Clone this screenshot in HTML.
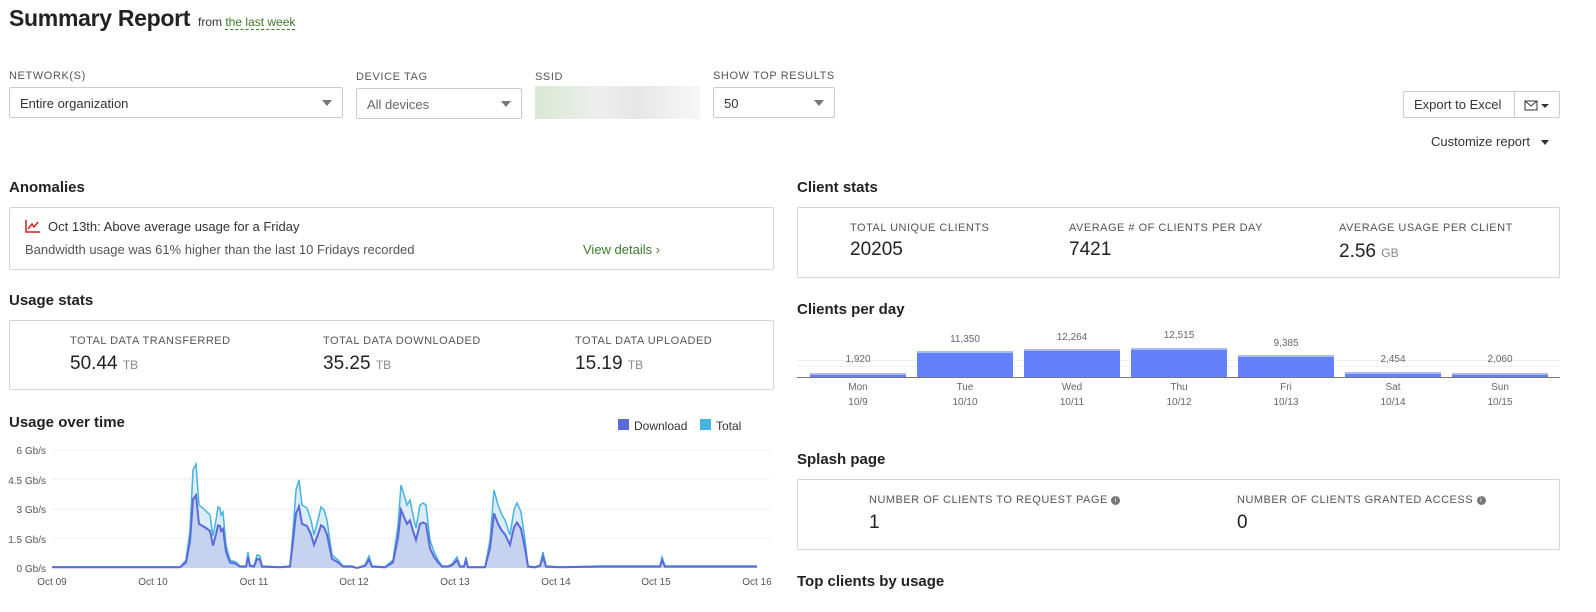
<!DOCTYPE html>
<html><head><meta charset="utf-8"><style>
*{box-sizing:border-box;margin:0;padding:0}
body{width:1596px;height:612px;overflow:hidden;background:#fff;font-family:"Liberation Sans",sans-serif;color:#222;position:relative}
.a{position:absolute;white-space:nowrap}
.lbl{font-size:11px;color:#555;letter-spacing:.6px}
.sel{position:absolute;border:1px solid #ccc;border-radius:2px;height:31px;font-size:13px;padding:8px 10px;color:#333}
.car{position:absolute;right:10px;top:12px;border-left:5px solid transparent;border-right:5px solid transparent;border-top:6px solid #777}
.box{position:absolute;border:1px solid #d5d5d5;border-radius:2px}
h2{position:absolute;font-size:15px;font-weight:bold;color:#222}
.sl{font-size:11px;color:#555;letter-spacing:.5px}
.sv{font-size:19px;color:#222}
.sv small{font-size:12px;color:#888}
.bar{position:absolute;background:#6381fb;border-top:2px solid #a9b9fb}
.bt{position:absolute;font-size:10px;color:#666;text-align:center;width:96px}
</style></head><body>
<div class="a" style="left:9px;top:5px;font-size:23px;font-weight:bold;letter-spacing:-0.3px">Summary Report</div>
<div class="a" style="left:198px;top:15px;font-size:12px;color:#333">from <span style="color:#3b7a2a;border-bottom:1px dashed #3b7a2a">the last week</span></div>

<div class="a lbl" style="left:9px;top:70px">NETWORK(S)</div>
<div class="sel" style="left:9px;top:87px;width:334px">Entire organization<div class="car"></div></div>
<div class="a lbl" style="left:356px;top:71px">DEVICE TAG</div>
<div class="sel" style="left:356px;top:88px;width:166px;color:#666">All devices<div class="car"></div></div>
<div class="a lbl" style="left:535px;top:71px">SSID</div>
<div class="a" style="left:535px;top:86px;width:165px;height:33px;background:linear-gradient(90deg,#d9e8d3,#eee 40%,#e6e6e6 60%,#f7f7f7)"></div>
<div class="a lbl" style="left:713px;top:70px">SHOW TOP RESULTS</div>
<div class="sel" style="left:713px;top:87px;width:122px">50<div class="car"></div></div>

<div class="a" style="left:1403px;top:91px;width:112px;height:27px;border:1px solid #ccc;border-radius:2px 0 0 2px;font-size:13px;padding:5px 10px;color:#333">Export to Excel</div>
<div class="a" style="left:1514px;top:91px;width:46px;height:27px;border:1px solid #ccc;border-radius:0 2px 2px 0">
<svg width="46" height="27"><rect x="10" y="9" width="12" height="9" fill="none" stroke="#333"/><path d="M10 9 L16 14 L22 9" fill="none" stroke="#333"/><path d="M26 12 L34 12 L30 16Z" fill="#333"/></svg></div>
<div class="a" style="left:1431px;top:134px;font-size:13px;color:#333">Customize report</div>
<div class="a" style="left:1541px;top:140px;border-left:4px solid transparent;border-right:4px solid transparent;border-top:5px solid #333"></div>

<h2 style="left:9px;top:179px">Anomalies</h2>
<div class="box" style="left:9px;top:207px;width:765px;height:63px"></div>
<svg class="a" style="left:25px;top:219px" width="16" height="14"><path d="M1 1 V13 H15" fill="none" stroke="#c22" stroke-width="1.5"/><path d="M3 10 L7 5 L9 8 L13 3" fill="none" stroke="#c22" stroke-width="1.5"/></svg>
<div class="a" style="left:48px;top:219px;font-size:13px;color:#333">Oct 13th: Above average usage for a Friday</div>
<div class="a" style="left:25px;top:242px;font-size:13px;color:#555">Bandwidth usage was 61% higher than the last 10 Fridays recorded</div>
<div class="a" style="left:583px;top:242px;font-size:13px;color:#3b7a2a">View details ›</div>

<h2 style="left:9px;top:292px">Usage stats</h2>
<div class="box" style="left:9px;top:320px;width:765px;height:70px"></div>
<div class="a sl" style="left:70px;top:335px">TOTAL DATA TRANSFERRED</div>
<div class="a sv" style="left:70px;top:353px">50.44 <small>TB</small></div>
<div class="a sl" style="left:323px;top:335px">TOTAL DATA DOWNLOADED</div>
<div class="a sv" style="left:323px;top:353px">35.25 <small>TB</small></div>
<div class="a sl" style="left:575px;top:335px">TOTAL DATA UPLOADED</div>
<div class="a sv" style="left:575px;top:353px">15.19 <small>TB</small></div>

<h2 style="left:9px;top:414px">Usage over time</h2>
<div class="a" style="left:618px;top:419px;width:11px;height:11px;background:#5b6ad9"></div>
<div class="a" style="left:634px;top:419px;font-size:12px;color:#333">Download</div>
<div class="a" style="left:700px;top:419px;width:11px;height:11px;background:#47b3e0"></div>
<div class="a" style="left:716px;top:419px;font-size:12px;color:#333">Total</div>
<svg class="a" style="left:0;top:440px" width="780" height="150">
<g font-family="Liberation Sans" font-size="10" fill="#555" text-anchor="end">
<text x="46" y="14">6 Gb/s</text><text x="46" y="44">4.5 Gb/s</text><text x="46" y="73">3 Gb/s</text><text x="46" y="103">1.5 Gb/s</text><text x="46" y="132">0 Gb/s</text></g>
<g stroke="#eee"><line x1="52" x2="770" y1="10" y2="10"/><line x1="52" x2="770" y1="39" y2="39"/><line x1="52" x2="770" y1="69" y2="69"/><line x1="52" x2="770" y1="98" y2="98"/></g>
<g id="ch" transform="translate(0,-440)"></g>
<g font-family="Liberation Sans" font-size="10" fill="#555" text-anchor="middle">
<text x="52" y="145">Oct 09</text><text x="153" y="145">Oct 10</text><text x="254" y="145">Oct 11</text><text x="354" y="145">Oct 12</text><text x="455" y="145">Oct 13</text><text x="556" y="145">Oct 14</text><text x="656" y="145">Oct 15</text><text x="757" y="145">Oct 16</text></g>
</svg>

<h2 style="left:797px;top:179px">Client stats</h2>
<div class="box" style="left:797px;top:207px;width:763px;height:71px"></div>
<div class="a sl" style="left:850px;top:222px">TOTAL UNIQUE CLIENTS</div>
<div class="a sv" style="left:850px;top:239px">20205</div>
<div class="a sl" style="left:1069px;top:222px">AVERAGE # OF CLIENTS PER DAY</div>
<div class="a sv" style="left:1069px;top:239px">7421</div>
<div class="a sl" style="left:1339px;top:222px">AVERAGE USAGE PER CLIENT</div>
<div class="a sv" style="left:1339px;top:241px">2.56 <small>GB</small></div>

<h2 style="left:797px;top:301px">Clients per day</h2>
<div class="a" style="left:797px;top:360px;width:763px;height:1px;background:#f0f0f0"></div>
<div class="a" style="left:797px;top:366px;width:763px;height:1px;background:#f0f0f0"></div>
<div class="bar" style="left:810px;top:373px;width:96px;height:4px"></div><div class="bt" style="left:810px;top:354px">1,920</div>
<div class="bar" style="left:917px;top:351px;width:96px;height:26px"></div><div class="bt" style="left:917px;top:334px">11,350</div>
<div class="bar" style="left:1024px;top:349px;width:96px;height:28px"></div><div class="bt" style="left:1024px;top:332px">12,264</div>
<div class="bar" style="left:1131px;top:348px;width:96px;height:29px"></div><div class="bt" style="left:1131px;top:330px">12,515</div>
<div class="bar" style="left:1238px;top:355px;width:96px;height:22px"></div><div class="bt" style="left:1238px;top:338px">9,385</div>
<div class="bar" style="left:1345px;top:372px;width:96px;height:5px"></div><div class="bt" style="left:1345px;top:354px">2,454</div>
<div class="bar" style="left:1452px;top:373px;width:96px;height:4px"></div><div class="bt" style="left:1452px;top:354px">2,060</div>
<div class="a" style="left:797px;top:377px;width:763px;height:1px;background:#777"></div>
<div class="bt" style="left:810px;top:382px">Mon</div><div class="bt" style="left:810px;top:397px">10/9</div>
<div class="bt" style="left:917px;top:382px">Tue</div><div class="bt" style="left:917px;top:397px">10/10</div>
<div class="bt" style="left:1024px;top:382px">Wed</div><div class="bt" style="left:1024px;top:397px">10/11</div>
<div class="bt" style="left:1131px;top:382px">Thu</div><div class="bt" style="left:1131px;top:397px">10/12</div>
<div class="bt" style="left:1238px;top:382px">Fri</div><div class="bt" style="left:1238px;top:397px">10/13</div>
<div class="bt" style="left:1345px;top:382px">Sat</div><div class="bt" style="left:1345px;top:397px">10/14</div>
<div class="bt" style="left:1452px;top:382px">Sun</div><div class="bt" style="left:1452px;top:397px">10/15</div>

<h2 style="left:797px;top:451px">Splash page</h2>
<div class="box" style="left:797px;top:479px;width:763px;height:71px"></div>
<div class="a sl" style="left:869px;top:494px">NUMBER OF CLIENTS TO REQUEST PAGE <span style="display:inline-block;width:9px;height:9px;border-radius:50%;background:#777;color:#fff;font-size:7px;text-align:center;line-height:9px;vertical-align:middle">i</span></div>
<div class="a sv" style="left:869px;top:512px">1</div>
<div class="a sl" style="left:1237px;top:494px">NUMBER OF CLIENTS GRANTED ACCESS <span style="display:inline-block;width:9px;height:9px;border-radius:50%;background:#777;color:#fff;font-size:7px;text-align:center;line-height:9px;vertical-align:middle">i</span></div>
<div class="a sv" style="left:1237px;top:512px">0</div>

<h2 style="left:797px;top:573px">Top clients by usage</h2>

<script>
var T="52,567 180,567 186,560 190,530 193,470 196,464 199,505 205,510 210,515 213,536 216,520 218,507 220,508 221,515 223,512 226,545 230,560 236,562 240,566 246,566 248,552 250,565 254,566 257,555 260,556 262,566 280,567 290,566 293,530 296,490 299,480 302,505 307,508 311,520 314,535 318,520 321,507 324,510 327,520 332,555 338,560 343,566 352,566 357,568 365,565 369,556 372,566 385,567 393,560 398,525 401,485 404,495 407,505 410,500 413,515 416,528 420,505 423,503 426,505 430,540 434,552 438,560 442,566 448,566 452,564 457,557 460,566 464,566 466,557 468,567 485,567 490,540 494,490 498,505 502,515 505,520 510,535 514,510 517,503 521,512 525,540 528,566 535,567 540,565 543,552 546,566 560,567 600,566 660,566 662,557 665,566 700,566 730,566 757,566";
var pts=T.split(" ").map(function(p){var a=p.split(",");return [+a[0],+a[1]];});
var D=pts.map(function(p){return [p[0],568-(568-p[1])*0.7];});
function s(a){return a.map(function(p){return p[0]+","+p[1].toFixed(1)}).join(" ");}
var g=document.getElementById("ch");
g.innerHTML='<polygon points="52,568 '+s(pts)+' 757,568" fill="#dcecf8"/>'+
'<polygon points="52,568 '+s(D)+' 757,568" fill="#c5d3f1"/>'+
'<polyline points="'+s(pts)+'" fill="none" stroke="#47b3e0" stroke-width="1.5"/>'+
'<polyline points="'+s(D)+'" fill="none" stroke="#5b6ad9" stroke-width="2"/>';
</script>
</body></html>
